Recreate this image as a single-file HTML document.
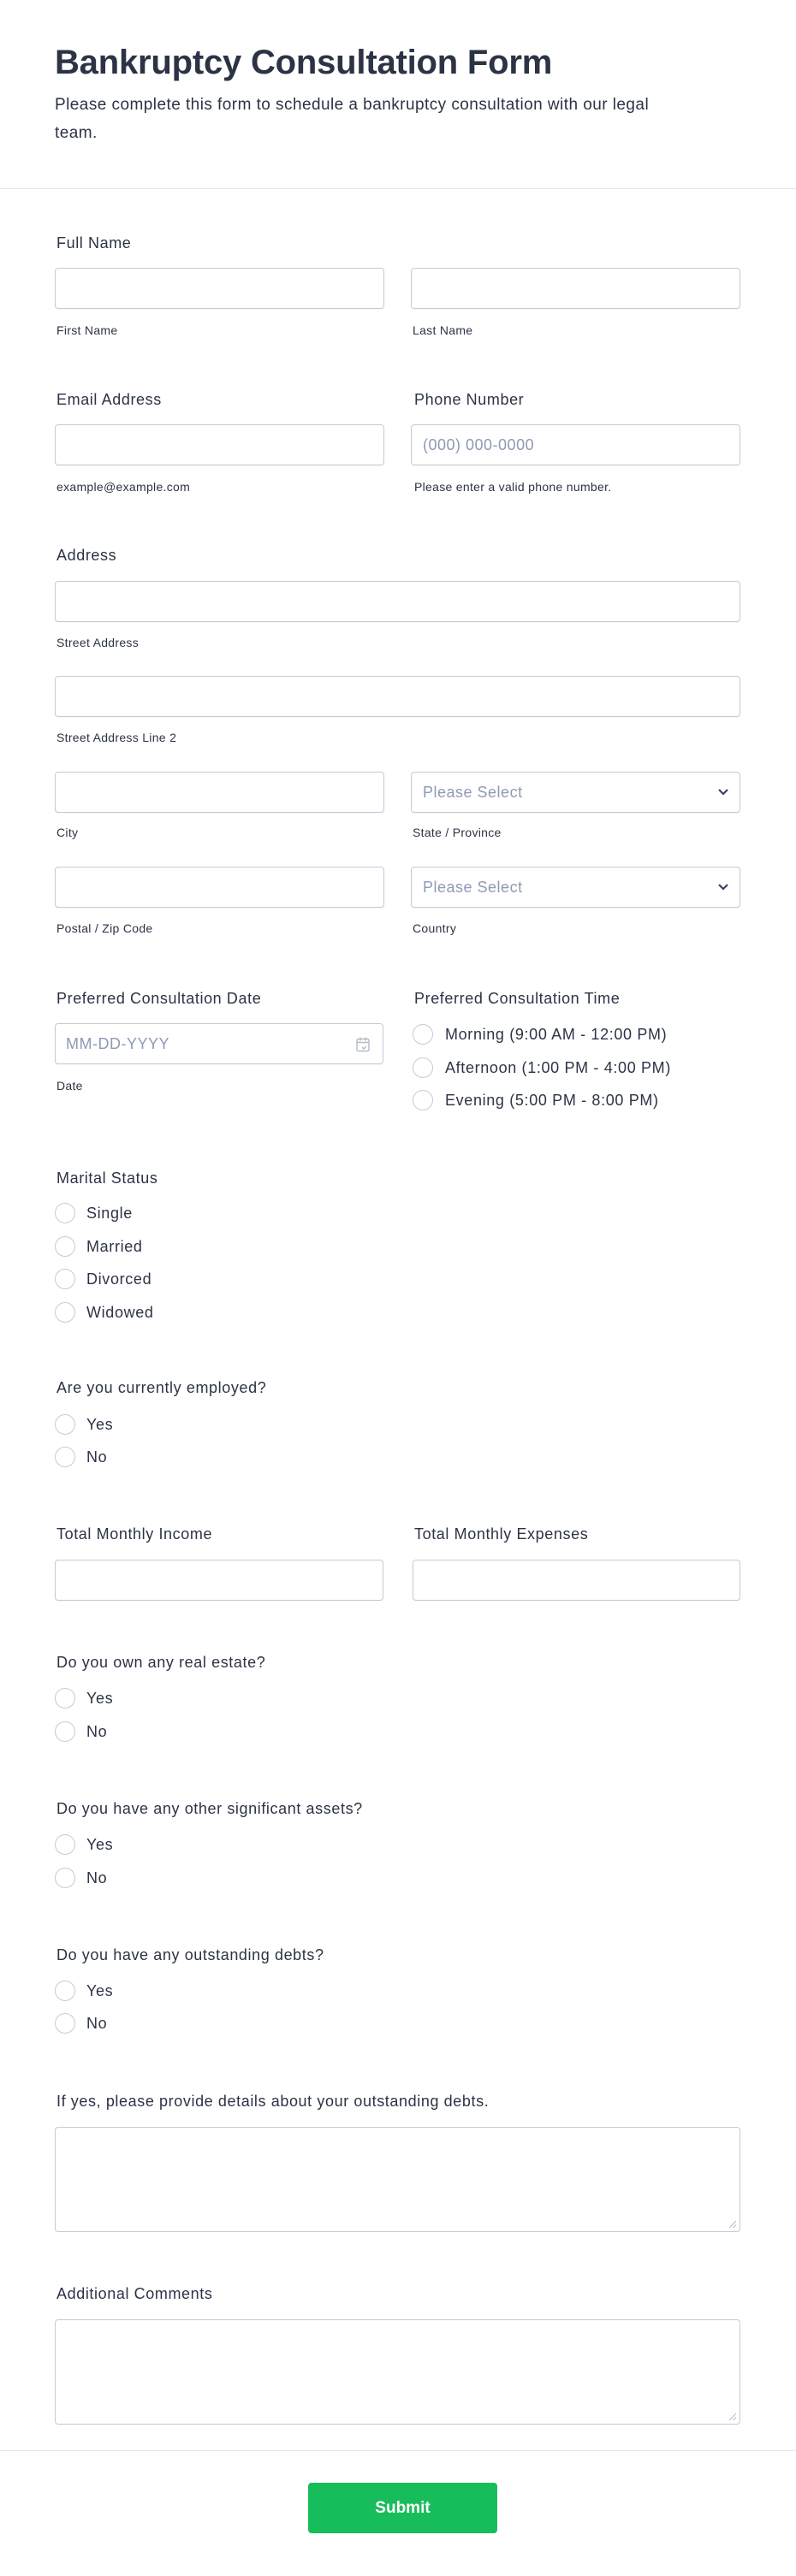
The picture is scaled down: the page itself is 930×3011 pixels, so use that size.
<!DOCTYPE html>
<html><head><meta charset="utf-8"><style>
*{box-sizing:border-box;margin:0;padding:0}
body{width:930px;height:3011px;background:#fff;position:relative;font-family:"Liberation Sans",Arial,sans-serif;color:#2c3345;overflow:hidden}
.a{position:absolute}
h1{position:absolute;left:64px;top:51px;font-size:40px;font-weight:bold;letter-spacing:-0.2px;color:#2c3345;white-space:nowrap}
.sub{position:absolute;left:64px;top:106px;width:820px;font-size:19px;letter-spacing:0.45px;line-height:33px;color:#2c3345}
.hr{position:absolute;left:0;width:930px;height:1px;background:#e3e6ee}
.lb{position:absolute;font-size:18px;letter-spacing:0.6px;color:#2c3345;white-space:nowrap;line-height:20px}
.in{position:absolute;height:48px;border:1px solid #c3cad8;border-radius:4px;background:#fff;box-shadow:0 1px 1px rgba(0,0,0,.04)}
.sl{position:absolute;font-size:14px;letter-spacing:0.3px;color:#2c3345;line-height:16px;white-space:nowrap}
.ph{position:absolute;left:13px;top:13px;font-size:18px;letter-spacing:0.5px;color:#8d9ab3;white-space:nowrap}
.r{position:absolute;width:24px;height:24px;border:1px solid #c3cad8;border-radius:50%;background:#fff}
.rt{position:absolute;font-size:18px;letter-spacing:0.65px;color:#2c3345;white-space:nowrap;line-height:20px}
.ta{position:absolute;left:64px;width:801px;border:1px solid #c3cad8;border-radius:4px}
.grip{position:absolute;right:4px;bottom:4px;width:8px;height:8px;background:linear-gradient(135deg,transparent 45%,#b7bdc9 45%,#b7bdc9 55%,transparent 55%,transparent 72%,#b7bdc9 72%,#b7bdc9 82%,transparent 82%)}
</style></head><body>
<h1>Bankruptcy Consultation Form</h1>
<div class="sub">Please complete this form to schedule a bankruptcy consultation with our legal<br>team.</div>
<div class="hr" style="top:220px"></div>

<div class="lb" style="left:66px;top:274px">Full Name</div>
<div class="in" style="left:64px;top:313px;width:385px"></div>
<div class="in" style="left:480px;top:313px;width:385px"></div>
<div class="sl" style="left:66px;top:378px">First Name</div>
<div class="sl" style="left:482px;top:378px">Last Name</div>

<div class="lb" style="left:66px;top:457px">Email Address</div>
<div class="lb" style="left:484px;top:457px">Phone Number</div>
<div class="in" style="left:64px;top:496px;width:385px"></div>
<div class="in" style="left:480px;top:496px;width:385px"><span class="ph">(000) 000-0000</span></div>
<div class="sl" style="left:66px;top:561px">example@example.com</div>
<div class="sl" style="left:484px;top:561px">Please enter a valid phone number.</div>

<div class="lb" style="left:66px;top:639px">Address</div>
<div class="in" style="left:64px;top:679px;width:801px"></div>
<div class="sl" style="left:66px;top:743px">Street Address</div>
<div class="in" style="left:64px;top:790px;width:801px"></div>
<div class="sl" style="left:66px;top:854px">Street Address Line 2</div>
<div class="in" style="left:64px;top:902px;width:385px"></div>
<div class="in" style="left:480px;top:902px;width:385px"><span class="ph">Please Select</span><svg class="a" style="right:12px;top:18px" width="14" height="10" viewBox="0 0 14 10"><path d="M2 2l5 5 5-5" fill="none" stroke="#3b4358" stroke-width="2.2"/></svg></div>
<div class="sl" style="left:66px;top:965px">City</div>
<div class="sl" style="left:482px;top:965px">State / Province</div>
<div class="in" style="left:64px;top:1013px;width:385px"></div>
<div class="in" style="left:480px;top:1013px;width:385px"><span class="ph">Please Select</span><svg class="a" style="right:12px;top:18px" width="14" height="10" viewBox="0 0 14 10"><path d="M2 2l5 5 5-5" fill="none" stroke="#3b4358" stroke-width="2.2"/></svg></div>
<div class="sl" style="left:66px;top:1077px">Postal / Zip Code</div>
<div class="sl" style="left:482px;top:1077px">Country</div>

<div class="lb" style="left:66px;top:1157px">Preferred Consultation Date</div>
<div class="lb" style="left:484px;top:1157px">Preferred Consultation Time</div>
<div class="in" style="left:64px;top:1196px;width:384px"><span class="ph" style="left:12px">MM-DD-YYYY</span>
<svg class="a" style="left:350px;top:14px" width="18" height="20" viewBox="0 0 18 20"><rect x="2" y="3.5" width="14" height="14" rx="1.5" fill="none" stroke="#b3bac8" stroke-width="1.4"/><path d="M2 7.5h14M6 1.5v4M12 1.5v4M8 13l2 2 3-3" fill="none" stroke="#b3bac8" stroke-width="1.4"/></svg></div>
<div class="sl" style="left:66px;top:1261px">Date</div>
<div class="r" style="left:482px;top:1197px"></div><div class="rt" style="left:520px;top:1199px">Morning (9:00 AM - 12:00 PM)</div>
<div class="r" style="left:482px;top:1236px"></div><div class="rt" style="left:520px;top:1238px">Afternoon (1:00 PM - 4:00 PM)</div>
<div class="r" style="left:482px;top:1274px"></div><div class="rt" style="left:520px;top:1276px">Evening (5:00 PM - 8:00 PM)</div>

<div class="lb" style="left:66px;top:1367px">Marital Status</div>
<div class="r" style="left:64px;top:1406px"></div><div class="rt" style="left:101px;top:1408px">Single</div>
<div class="r" style="left:64px;top:1445px"></div><div class="rt" style="left:101px;top:1447px">Married</div>
<div class="r" style="left:64px;top:1483px"></div><div class="rt" style="left:101px;top:1485px">Divorced</div>
<div class="r" style="left:64px;top:1522px"></div><div class="rt" style="left:101px;top:1524px">Widowed</div>

<div class="lb" style="left:66px;top:1612px">Are you currently employed?</div>
<div class="r" style="left:64px;top:1653px"></div><div class="rt" style="left:101px;top:1655px">Yes</div>
<div class="r" style="left:64px;top:1691px"></div><div class="rt" style="left:101px;top:1693px">No</div>

<div class="lb" style="left:66px;top:1783px">Total Monthly Income</div>
<div class="lb" style="left:484px;top:1783px">Total Monthly Expenses</div>
<div class="in" style="left:64px;top:1823px;width:384px"></div>
<div class="in" style="left:482px;top:1823px;width:383px"></div>

<div class="lb" style="left:66px;top:1933px">Do you own any real estate?</div>
<div class="r" style="left:64px;top:1973px"></div><div class="rt" style="left:101px;top:1975px">Yes</div>
<div class="r" style="left:64px;top:2012px"></div><div class="rt" style="left:101px;top:2014px">No</div>

<div class="lb" style="left:66px;top:2104px">Do you have any other significant assets?</div>
<div class="r" style="left:64px;top:2144px"></div><div class="rt" style="left:101px;top:2146px">Yes</div>
<div class="r" style="left:64px;top:2183px"></div><div class="rt" style="left:101px;top:2185px">No</div>

<div class="lb" style="left:66px;top:2275px">Do you have any outstanding debts?</div>
<div class="r" style="left:64px;top:2315px"></div><div class="rt" style="left:101px;top:2317px">Yes</div>
<div class="r" style="left:64px;top:2353px"></div><div class="rt" style="left:101px;top:2355px">No</div>

<div class="lb" style="left:66px;top:2446px">If yes, please provide details about your outstanding debts.</div>
<div class="ta" style="top:2486px;height:123px"><div class="grip"></div></div>

<div class="lb" style="left:66px;top:2671px">Additional Comments</div>
<div class="ta" style="top:2711px;height:123px"><div class="grip"></div></div>

<div class="hr" style="top:2864px"></div>
<div class="a" style="left:360px;top:2902px;width:221px;height:59px;background:#18bd5b;border-radius:4px;color:#fff;font-size:19px;font-weight:bold;text-align:center;line-height:59px">Submit</div>
</body></html>
